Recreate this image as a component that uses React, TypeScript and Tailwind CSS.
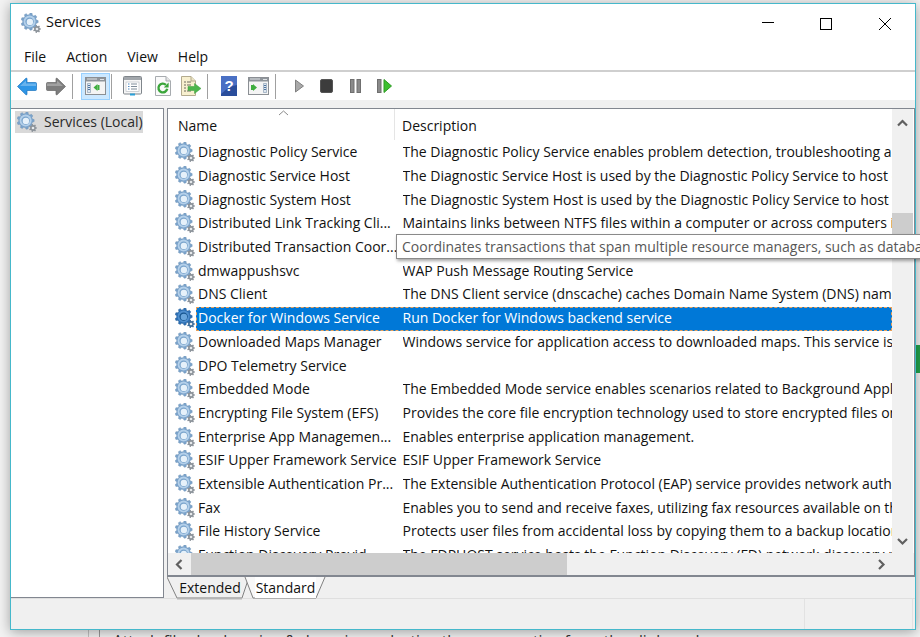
const services = [
  ["Diagnostic Policy Service", "The Diagnostic Policy Service enables problem detection, troubleshooting and resolution for Windows components."],
  ["Diagnostic Service Host", "The Diagnostic Service Host is used by the Diagnostic Policy Service to host diagnostics that need to run."],
  ["Diagnostic System Host", "The Diagnostic System Host is used by the Diagnostic Policy Service to host diagnostics that need to run."],
  ["Distributed Link Tracking Cli...", "Maintains links between NTFS files within a computer or across computers in a network."],
  ["Distributed Transaction Coor...", "Coordinates transactions that span multiple resource managers, such as databases."],
  ["dmwappushsvc", "WAP Push Message Routing Service"],
  ["DNS Client", "The DNS Client service (dnscache) caches Domain Name System (DNS) names and registers."],
  ["Docker for Windows Service", "Run Docker for Windows backend service"],
  ["Downloaded Maps Manager", "Windows service for application access to downloaded maps. This service is started on demand."],
  ["DPO Telemetry Service", ""],
  ["Embedded Mode", "The Embedded Mode service enables scenarios related to Background Applications."],
  ["Encrypting File System (EFS)", "Provides the core file encryption technology used to store encrypted files on NTFS."],
  ["Enterprise App Managemen...", "Enables enterprise application management."],
  ["ESIF Upper Framework Service", "ESIF Upper Framework Service"],
  ["Extensible Authentication Pr...", "The Extensible Authentication Protocol (EAP) service provides network authentication."],
  ["Fax", "Enables you to send and receive faxes, utilizing fax resources available on this computer."],
  ["File History Service", "Protects user files from accidental loss by copying them to a backup location."],
  ["Function Discovery Provid...", "The FDPHOST service hosts the Function Discovery (FD) network discovery providers."],
];

function gearPath(cx: number, cy: number, outer: number, inner: number, teeth: number) {
  const step = (Math.PI * 2) / teeth;
  let d = "";
  for (let i = 0; i < teeth; i++) {
    const a = i * step;
    const pts = [
      [inner, a - step * 0.32],
      [outer, a - step * 0.17],
      [outer, a + step * 0.17],
      [inner, a + step * 0.32],
    ];
    for (const [r, t] of pts) {
      d += `${d ? "L" : "M"}${(cx + r * Math.cos(t)).toFixed(2)} ${(cy + r * Math.sin(t)).toFixed(2)}`;
    }
  }
  return d + "Z";
}

const bigGear = gearPath(8.6, 8.6, 8.6, 6.9, 9);
const smallGear = gearPath(16, 16, 4, 2.9, 7);

function GearIcon({ selected = false }: { selected?: boolean }) {
  return (
    <svg width="21" height="21" viewBox="0 0 21 21" className="shrink-0">
      <path d={bigGear} fill={selected ? "#2e70b4" : "#7ba3cb"} stroke={selected ? "#235c99" : "#6f94b8"} strokeWidth="0.5" />
      <circle cx="8.6" cy="8.6" r="6" fill={selected ? "#4f8fcf" : "#b4d0ea"} />
      <circle cx="8.6" cy="8.6" r="4.2" fill={selected ? "#17558f" : "#7aa4cc"} />
      <circle cx="8.9" cy="8.9" r="3.2" fill={selected ? "#6aa6dc" : "#e6f1fa"} />
      <path d={smallGear} fill={selected ? "#3c6d9c" : "#8b9299"} />
      <circle cx="16" cy="16" r="1.3" fill="#e6e9ec" />
    </svg>
  );
}

function ArrowIcon({ color, dark, flip }: { color: string; dark: string; flip?: boolean }) {
  return (
    <svg width="20" height="19" viewBox="0 0 20 19" className={flip ? "-scale-x-100" : ""}>
      <path d="M0.5 9.5 9 1.2Q10 .8 10 2V5.5H18.5Q19.5 5.5 19.5 6.5V12.5Q19.5 13.5 18.5 13.5H10V17Q10 18.2 9 17.8Z" fill={color} stroke={dark} strokeWidth="0.7" />
      <path d="M3 9 9 3.5V6.5H19V9Z" fill="#ffffff" opacity="0.28" />
    </svg>
  );
}

function PaneIcon({ left }: { left: boolean }) {
  return (
    <svg width="21" height="18" viewBox="0 0 21 18">
      <rect x="0.5" y="0.5" width="20" height="17" fill="#f4f4f4" stroke="#8b8f94" />
      <rect x="1" y="1" width="19" height="3.5" fill="#8f959b" />
      <path d="M2 2h10M15 2.5h4" stroke="#dfe2e5" strokeWidth="1" />
      {left ? (
        <>
          <path d="M2.5 6.5h3v9h-3z" fill="#dfe7f0" stroke="#7d93ab" strokeWidth="0.6" />
          <path d="M3 8.5h2M3 10.5h2M3 12.5h2" stroke="#4d74a0" />
          <path d="M12.5 7v7L8.5 10.5Z" fill="#3fae3f" />
          <rect x="12.5" y="8" width="2" height="5" fill="#3fae3f" />
        </>
      ) : (
        <>
          <path d="M15.5 6.5h3v9h-3z" fill="#dfe7f0" stroke="#7d93ab" strokeWidth="0.6" />
          <path d="M16 8.5h2M16 10.5h2M16 12.5h2" stroke="#4d74a0" />
          <path d="M5 7v7l4-3.5Z" fill="#3fae3f" />
          <rect x="3" y="8" width="2" height="5" fill="#3fae3f" />
        </>
      )}
    </svg>
  );
}

function PropertiesIcon() {
  return (
    <svg width="19" height="20" viewBox="0 0 19 20">
      <rect x="0.5" y="0.5" width="18" height="17.5" rx="1" fill="#f7f7f7" stroke="#7f858b" />
      <rect x="1" y="1" width="17" height="3" fill="#a2a7ac" />
      <rect x="3" y="6" width="13" height="9.5" fill="#ffffff" stroke="#b5bac0" strokeWidth="0.6" />
      <path d="M5 8h1.5M5 10.5h1.5M5 13h1.5" stroke="#4f89c0" />
      <path d="M8 8h6M8 10.5h6M8 13h6" stroke="#7f8c99" />
      <rect x="7" y="17.5" width="5" height="2" fill="#2ba0d8" />
    </svg>
  );
}

function RefreshIcon() {
  return (
    <svg width="16" height="20" viewBox="0 0 16 20">
      <path d="M.5.5H11L15.5 5V19.5H.5Z" fill="#fafafa" stroke="#a7abaf" />
      <path d="M11 .5V5H15.5" fill="#e4e4e4" stroke="#a7abaf" />
      <path d="M12.2 12.8a4.4 4.4 0 1 1-1.3-4" fill="none" stroke="#3aa53a" strokeWidth="2.4" />
      <path d="M13.6 6.6v4.8H8.8Z" fill="#3aa53a" />
    </svg>
  );
}

function ExportIcon() {
  return (
    <svg width="20" height="20" viewBox="0 0 20 20">
      <path d="M.5.5H10L14.5 5V19.5H.5Z" fill="#f8f0cf" stroke="#b3ab8e" />
      <path d="M10 .5V5H14.5" fill="#ebe3c3" stroke="#b3ab8e" />
      <path d="M3 6h2M6 6h4M3 9h2M6 9h4M3 12h2M3 15h2M6 15h4" stroke="#6d6a5e" />
      <path d="M7 10.5h6.5V7.5L20 12.5l-6.5 5v-3H7Z" fill="#4cb64c" stroke="#3c9c3c" strokeWidth="0.5" />
    </svg>
  );
}

function HelpIcon() {
  return (
    <svg width="16" height="20" viewBox="0 0 16 20">
      <rect width="16" height="20" fill="#2a4d9b" />
      <path d="M0 0H16V9Q8 10 0 18Z" fill="#4a70c4" />
      <text x="8" y="15" textAnchor="middle" fontSize="15" fontWeight="700" fill="#ffffff" fontFamily="Liberation Sans, sans-serif">?</text>
    </svg>
  );
}

function Divider() {
  return <div className="w-px h-[25px] bg-[#a0a0a0] shrink-0" />;
}

function Media({ children, width }: { children: React.ReactNode; width: number }) {
  return (
    <svg width={width} height="14" viewBox={`0 0 ${width} 14`} className="shrink-0">
      {children}
    </svg>
  );
}

function Chevron({ dir }: { dir: "up" | "down" | "left" | "right" }) {
  const d = {
    up: "M1 6.5 5.5 2 10 6.5",
    down: "M1 2 5.5 6.5 10 2",
    left: "M6.5 1 2 5.5 6.5 10",
    right: "M2 1 6.5 5.5 2 10",
  }[dir];
  const vertical = dir === "up" || dir === "down";
  return (
    <svg width={vertical ? 11 : 9} height={vertical ? 9 : 11} viewBox={vertical ? "0 0 11 9" : "0 0 9 11"}>
      <path d={d} fill="none" stroke="#606060" strokeWidth="2.2" />
    </svg>
  );
}

export default function App() {
  return (
    <div className="relative w-[920px] h-[637px] overflow-hidden bg-[#f3f3f3] text-[#111] [font-family:'Open_Sans',sans-serif] text-[14px]">
      {/* desktop behind the window */}
      <div className="absolute right-0 top-[345px] w-[4px] h-[28px] bg-[#21a44c]" />
      <div className="absolute left-[88px] top-[630px] w-px h-[7px] bg-[#c4c4c4]" />
      <div className="absolute left-[99px] top-[630px] w-px h-[7px] bg-[#9a9a9a]" />
      <div className="absolute left-[113px] top-[630px] whitespace-nowrap text-[15.5px] text-[#333]">
        Attach files by dragging &amp; dropping, selecting them, or pasting from the clipboard.
      </div>

      {/* services window */}
      <div className="absolute left-[10px] top-[3px] w-[906px] h-[627px] flex flex-col bg-white border border-[#45b8cb] shadow-[0_2px_12px_rgba(0,0,0,0.35)]">
        <div className="h-[39px] flex items-center pl-[10px] shrink-0">
          <GearIcon />
          <span className="ml-[4px] mb-[3px] text-[14.5px]">Services</span>
          <div className="ml-auto flex items-center">
            <svg width="14" height="14" viewBox="0 0 14 14" className="mr-[44px]">
              <path d="M1 5.5H13" stroke="#000" strokeWidth="1" />
            </svg>
            <svg width="14" height="14" viewBox="0 0 14 14" className="mr-[45px]">
              <rect x="1.5" y="1.5" width="11" height="11" fill="none" stroke="#000" />
            </svg>
            <svg width="14" height="14" viewBox="0 0 14 14" className="mr-[23px]">
              <path d="M1 1 13 13M13 1 1 13" stroke="#000" strokeWidth="1" />
            </svg>
          </div>
        </div>

        <div className="h-[27px] flex items-center gap-[20px] pl-[13px] shrink-0">
          <span>File</span>
          <span>Action</span>
          <span>View</span>
          <span>Help</span>
        </div>
        <div className="h-[2px] bg-[#cfcfcf] shrink-0" />

        <div className="h-[28px] flex items-center pl-[6px] shrink-0">
          <ArrowIcon color="#2f96e6" dark="#1d74bd" />
          <div className="ml-[9px]"><ArrowIcon color="#7d7d7d" dark="#666666" flip /></div>
          <div className="ml-[6px]"><Divider /></div>
          <div className="ml-[8px] w-[29px] h-[27px] flex items-center justify-center bg-[#cce8ff] border border-[#99d1ff]">
            <PaneIcon left />
          </div>
          <div className="ml-px"><Divider /></div>
          <div className="ml-[11px]"><PropertiesIcon /></div>
          <div className="ml-[13px]"><RefreshIcon /></div>
          <div className="ml-[10px]"><ExportIcon /></div>
          <div className="ml-[6px]"><Divider /></div>
          <div className="ml-[13px]"><HelpIcon /></div>
          <div className="ml-[11px]"><PaneIcon left={false} /></div>
          <div className="ml-[6px]"><Divider /></div>
          <div className="ml-[19px]">
            <Media width={9}>
              <path d="M.5 1 8.5 7 .5 13Z" fill="#a9a9a9" stroke="#808080" />
            </Media>
          </div>
          <div className="ml-[16px]">
            <Media width={13}>
              <rect x="0.5" y="0.5" width="12" height="13" rx="1.5" fill="#3c3c3c" stroke="#555" />
            </Media>
          </div>
          <div className="ml-[17px]">
            <Media width={11}>
              <rect x="0.5" y="0.5" width="3.5" height="13" fill="#8a8a8a" stroke="#6f6f6f" />
              <rect x="7" y="0.5" width="3.5" height="13" fill="#8a8a8a" stroke="#6f6f6f" />
            </Media>
          </div>
          <div className="ml-[16px]">
            <Media width={15}>
              <rect x="0.5" y="0.5" width="3.5" height="13" fill="#8a8a8a" stroke="#6f6f6f" />
              <path d="M7 .5 14.5 7 7 13.5Z" fill="#3cc02f" stroke="#2f9a25" />
            </Media>
          </div>
        </div>

        <div className="h-[8px] bg-[#f0f0f0] shrink-0" />

        <div className="flex-1 min-h-0 flex bg-[#f0f0f0]">
          {/* tree */}
          <div className="w-[153px] bg-white border-t border-r border-b border-[#828790] pt-[2px] pl-[4px] shrink-0">
            <div className="w-[128px] h-[22px] flex items-center pl-[2px] bg-[#d9d9d9]">
              <GearIcon />
              <span className="ml-[6px] pb-[2px] text-[#2a2a2a] whitespace-nowrap">Services (Local)</span>
            </div>
          </div>

          <div className="w-[748px] ml-[3px] flex flex-col shrink-0">
            {/* list */}
            <div className="h-[469px] flex flex-col border-t border-l border-r border-b-2 border-[#828790] bg-white shrink-0">
              <div className="flex-1 min-h-0 flex">
                <div className="w-[724px] flex flex-col min-h-0 shrink-0">
                  <div className="relative h-[32px] flex shrink-0">
                    <div className="w-[227px] pl-[10px] pt-[6px] border-r border-[#e5e5e5] h-[31px]">Name</div>
                    <div className="pl-[7px] pt-[6px]">Description</div>
                    <svg width="11" height="6" viewBox="0 0 11 6" className="absolute left-[110px] top-[1px]">
                      <path d="M1 5 5.5 1 10 5" fill="none" stroke="#8a8a8a" strokeWidth="1" />
                    </svg>
                  </div>
                  <div className="flex-1 min-h-0 overflow-hidden">
                    {services.map(([name, desc]) => {
                      const selected = name.startsWith("Docker");
                      return (
                        <div key={name} className="h-[23.7px] flex items-center pl-[7px] whitespace-nowrap">
                          <GearIcon selected={selected} />
                          <div className={selected ? "flex-1 min-w-0 h-full flex items-center bg-[#0078d7] text-white outline-1 -outline-offset-1 outline-dashed outline-[#e8a05a]" : "flex-1 min-w-0 h-full flex items-center"}>
                            <span className="w-[206.5px] pl-[2px] pb-[2px] shrink-0 overflow-hidden">{name}</span>
                            <span className="flex-1 min-w-0 pb-[2px] overflow-hidden">{desc}</span>
                          </div>
                        </div>
                      );
                    })}
                  </div>
                </div>
                {/* vertical scrollbar */}
                <div className="w-[21px] flex flex-col bg-[#f0f0f0] shrink-0">
                  <div className="h-[26px] flex items-center justify-center pt-[2px]"><Chevron dir="up" /></div>
                  <div className="mt-[78px] h-[46px] bg-[#cdcdcd]" />
                  <div className="flex-1" />
                  <div className="h-[24px] flex items-center justify-center"><Chevron dir="down" /></div>
                </div>
              </div>
              {/* horizontal scrollbar */}
              <div className="h-[22px] flex bg-[#f0f0f0] shrink-0">
                <div className="w-[23px] flex items-center justify-center"><Chevron dir="left" /></div>
                <div className="w-[376px] bg-[#cdcdcd]" />
                <div className="flex-1" />
                <div className="w-[44px] pr-[22px] flex items-center justify-center"><Chevron dir="right" /></div>
              </div>
            </div>

            {/* tabs */}
            <div className="relative h-[22px] flex pl-[12px] gap-[14px] shrink-0">
              <svg width="160" height="23" viewBox="0 0 160 23" className="absolute left-0 top-0">
                <path d="M0 0 10 21H75L82 0" fill="#f0f0f0" stroke="#808080" strokeWidth="1" />
                <path d="M78 0 86 21H149L158 0" fill="#f8f8f8" stroke="#808080" strokeWidth="1" />
                <path d="M10 21.5H75" stroke="#b5b5b5" strokeWidth="2" />
              </svg>
              <span className="relative w-[62px] h-[21px] flex items-center justify-center">Extended</span>
              <span className="relative w-[61px] h-[21px] flex items-center justify-center bg-white">Standard</span>
            </div>
          </div>
        </div>

        {/* status bar */}
        <div className="h-[31px] flex bg-[#f0f0f0] border-t border-[#dfdfdf] shrink-0">
          <div className="w-[794px] border-r border-[#e2e2e2]" />
          <div className="w-[108px] border-r border-[#e2e2e2]" />
        </div>
      </div>

      {/* tooltip for the hovered row */}
      <div className="absolute left-[396px] top-[234px] w-[540px] h-[25px] flex items-center pl-[5px] bg-white border-y border-l border-[#8a8a8a] shadow-[1px_2px_3px_rgba(0,0,0,0.35)] text-[#575757] whitespace-nowrap">
        Coordinates transactions that span multiple resource managers, such as databases, message queues
      </div>
    </div>
  );
}
